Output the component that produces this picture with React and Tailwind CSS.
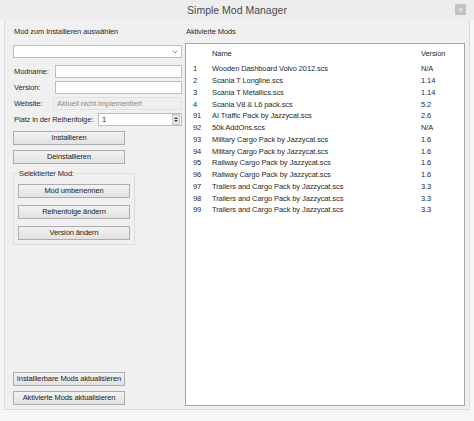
import { ChevronDown } from "lucide-react";

const mods = [
  ["1", "Wooden Dashboard Volvo 2012.scs", "N/A"],
  ["2", "Scania T Longline.scs", "1.14"],
  ["3", "Scania T Metallics.scs", "1.14"],
  ["4", "Scania V8 & L6 pack.scs", "5.2"],
  ["91", "AI Traffic Pack by Jazzycat.scs", "2.6"],
  ["92", "50k AddOns.scs", "N/A"],
  ["93", "Military Cargo Pack by Jazzycat.scs", "1.6"],
  ["94", "Military Cargo Pack by Jazzycat.scs", "1.6"],
  ["95", "Railway Cargo Pack by Jazzycat.scs", "1.6"],
  ["96", "Railway Cargo Pack by Jazzycat.scs", "1.6"],
  ["97", "Trailers and Cargo Pack by Jazzycat.scs", "3.3"],
  ["98", "Trailers and Cargo Pack by Jazzycat.scs", "3.3"],
  ["99", "Trailers and Cargo Pack by Jazzycat.scs", "3.3"],
];

function Button({ children, className = "" }) {
  return (
    <div
      className={`h-[14px] border border-[#adadad] bg-gradient-to-b from-[#f2f2f2] to-[#e2e2e2] flex items-center justify-center whitespace-nowrap text-[#222] ${className}`}
    >
      {children}
    </div>
  );
}

export default function App() {
  return (
    <div
      className="w-[474px] h-[421px] bg-[#f6f6f6] flex flex-col overflow-hidden"
      style={{ fontFamily: '"Liberation Sans", Arial, sans-serif' }}
    >
      {/* title bar */}
      <div className="h-[20px] relative flex items-center justify-center bg-[#ededed]">
        <span className="text-[10.5px] text-[#4a4a4a] pt-[1px]">Simple Mod Manager</span>
        <div className="absolute right-[8px] top-[4px] w-[11px] h-[11px] bg-[#c2c2c2] flex items-center justify-center text-white text-[7px] leading-none">
          x
        </div>
      </div>

      {/* client area */}
      <div className="mx-[4px] h-[390px] bg-[#f0f0f0] border-l border-r border-b border-[#dadada] flex text-[7.5px] tracking-[-0.1px] text-[#2a2a2a]">
        {/* left column */}
        <div className="w-[180px] pl-[8px] pr-[3px] pt-[7px] pb-[4px] flex flex-col">
          <div className="leading-[10px] pl-[1px]">Mod zum Installieren auswählen</div>
          <div className="mt-[8px] h-[13px] bg-white border border-[#bdbdbd] flex items-center justify-end pr-[2px]">
            <ChevronDown size={8} strokeWidth={2} className="text-[#555]" />
          </div>

          <div className="mt-[7px] flex flex-col gap-[3px] whitespace-nowrap">
            <div className="flex items-center h-[13px]">
              <span className="w-[42px] pl-[1px]">Modname:</span>
              <div className="flex-1 h-full bg-white border border-[#bdbdbd]" />
            </div>
            <div className="flex items-center h-[13px]">
              <span className="w-[42px] pl-[1px]">Version:</span>
              <div className="flex-1 h-full bg-white border border-[#bdbdbd]" />
            </div>
            <div className="flex items-center h-[13px]">
              <span className="w-[40px] pl-[1px]">Website:</span>
              <div className="flex-1 h-full bg-[#efefef] border border-[#e2e2e2] flex items-center pl-[3px] text-[#8c8c8c]">
                Aktuell nicht implementiert
              </div>
            </div>
            <div className="flex items-center h-[13px]">
              <span className="w-[85px] pl-[1px]">Platz in der Reihenfolge:</span>
              <div className="flex-1 h-full bg-white border border-[#bdbdbd] flex items-center pl-[3px]">
                <span className="flex-1">1</span>
                <div className="w-[8px] h-[11px] mr-[1px] bg-[#e6e6e6] border border-[#c8c8c8] flex flex-col items-center justify-center gap-[1px]">
                  <span className="w-0 h-0 border-l-[2px] border-r-[2px] border-b-[2px] border-l-transparent border-r-transparent border-b-[#444]" />
                  <span className="w-0 h-0 border-l-[2px] border-r-[2px] border-t-[2px] border-l-transparent border-r-transparent border-t-[#444]" />
                </div>
              </div>
            </div>
          </div>

          <Button className="mt-[5px] w-[112px]">Installieren</Button>
          <Button className="mt-[5px] w-[112px]">Deinstallieren</Button>

          <div className="mt-[9px] w-[122px] h-[72px] border border-[#dcdcdc] relative px-[4px] pt-[10px] flex flex-col gap-[7px]">
            <span className="absolute -top-[5px] left-[3px] px-[2px] bg-[#f0f0f0] leading-[10px]">
              Selektierter Mod:
            </span>
            <Button>Mod umbenennen</Button>
            <Button>Reihenfolge ändern</Button>
            <Button>Version ändern</Button>
          </div>

          <div className="mt-auto flex flex-col gap-[5px]">
            <Button className="w-[112px]">Installierbare Mods aktualisieren</Button>
            <Button className="w-[112px]">Aktivierte Mods aktualisieren</Button>
          </div>
        </div>

        {/* right column */}
        <div className="flex-1 pr-[4px] pt-[7px] pb-[3px] flex flex-col">
          <div className="leading-[10px] pl-[1px]">Aktivierte Mods</div>
          <div className="mt-[6px] flex-1 bg-white border border-[#a6a6a6] whitespace-nowrap">
            <div className="h-[19px] flex items-center">
              <span className="w-[26px]" />
              <span className="flex-1">Name</span>
              <span className="w-[43px]">Version</span>
            </div>
            {mods.map(([n, name, v]) => (
              <div key={n + name} className="h-[11.75px] flex items-center">
                <span className="w-[26px] pl-[7px]">{n}</span>
                <span className="flex-1">{name}</span>
                <span className="w-[43px]">{v}</span>
              </div>
            ))}
          </div>
        </div>
      </div>
    </div>
  );
}
